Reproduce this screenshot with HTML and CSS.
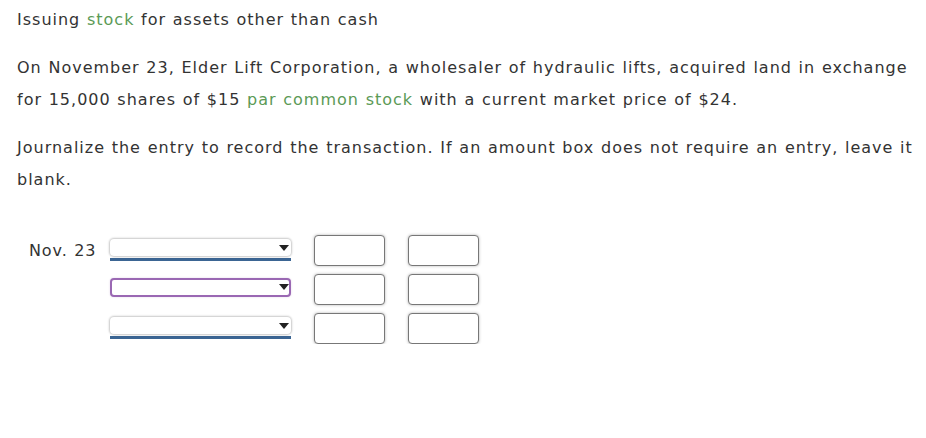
FILE: index.html
```html
<!DOCTYPE html>
<html lang="en">
<head>
    <meta charset="UTF-8">
    <meta name="viewport" content="width=device-width, initial-scale=1.0">
    <title>Issuing stock for assets other than cash</title>
    <link rel="stylesheet" href="styles.css">
</head>
<body>
    <div class="question">
        <p class="title">Issuing <span class="term">stock</span> for assets other than cash</p>
        <p>On November 23, Elder Lift Corporation, a wholesaler of hydraulic lifts, acquired land in exchange for 15,000 shares of $15 <span class="term">par common stock</span> with a current market price of $24.</p>
        <p>Journalize the entry to record the transaction. If an amount box does not require an entry, leave it blank.</p>
    </div>

    <div class="journal">
        <!-- row 1 -->
        <div class="date">Nov. 23</div>
        <div class="acct">
            <div class="acct-box"><span class="caret"></span></div>
        </div>
        <div class="amount"></div>
        <div class="amount"></div>

        <!-- row 2 (focused) -->
        <div class="date"></div>
        <div class="acct active">
            <div class="acct-box"><span class="caret"></span></div>
        </div>
        <div class="amount"></div>
        <div class="amount"></div>

        <!-- row 3 -->
        <div class="date"></div>
        <div class="acct">
            <div class="acct-box"><span class="caret"></span></div>
        </div>
        <div class="amount"></div>
        <div class="amount"></div>
    </div>
</body>
</html>
```

FILE: styles.css
```css
body {
    margin: 0;
    padding: 4px 6px 0 17px;
    font-family: "DejaVu Sans", Verdana, sans-serif;
    font-size: 16px;
    letter-spacing: 1px;
    word-spacing: 0.6px;
    color: #333333;
    background: #ffffff;
}

.question p {
    margin: 0 0 16px 0;
    line-height: 32px;
}

.term {
    color: #5b9a56;
}

.journal {
    display: grid;
    grid-template-columns: 93px 181px 94px 94px;
    grid-auto-rows: 31px;
    row-gap: 8px;
    margin-top: 39px;
}

.date {
    padding-left: 12px;
    line-height: 32px;
    letter-spacing: 0.9px;
}

.acct {
    align-self: start;
    margin-top: 4px;
    padding-bottom: 2px;
    border-bottom: 3px solid #3b6593;
}

.acct-box {
    position: relative;
    height: 17px;
    background: #ffffff;
    border-radius: 4px;
    box-shadow: 0 0 2px 1px rgba(0, 0, 0, 0.22);
}

.acct.active {
    margin-top: 4px;
    padding-bottom: 0;
    border-bottom: none;
}

.acct.active .acct-box {
    height: 15px;
    border: 2px solid #9a68b3;
    box-shadow: 0 0 2px rgba(154, 104, 179, 0.3);
}

.caret {
    position: absolute;
    right: 2px;
    top: 6px;
    width: 0;
    height: 0;
    border-left: 5px solid transparent;
    border-right: 5px solid transparent;
    border-top: 6px solid #222222;
}

.acct.active .caret {
    right: 0;
    top: 4px;
}

.amount {
    box-sizing: border-box;
    margin-left: 23px;
    border: 1px solid #777777;
    border-radius: 4px;
    box-shadow: 0 0 3px rgba(0, 0, 0, 0.3);
    background: #ffffff;
}
```
